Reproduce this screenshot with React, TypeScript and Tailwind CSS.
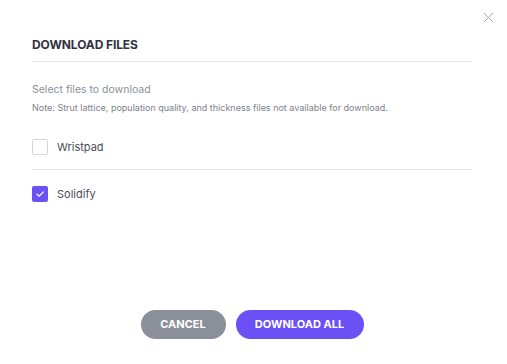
import React from "react";

function Check({ checked, label }: { checked: boolean; label: string }) {
  return (
    <div className="flex items-center gap-[9px]">
      {checked ? (
        <div className="w-4 h-4 rounded-[2px] bg-[#6b50f6] flex items-center justify-center">
          <svg width="10" height="10" viewBox="0 0 10 10" fill="none">
            <path d="M2 5.2 L4.2 7.2 L8.2 3" stroke="white" strokeWidth="1.2" strokeLinecap="round" strokeLinejoin="round" />
          </svg>
        </div>
      ) : (
        <div className="w-4 h-4 rounded-[2px] border border-[#d4d6da] bg-white" />
      )}
      <span className="text-[11px] leading-4 text-[#4a4d57]">{label}</span>
    </div>
  );
}

export default function App() {
  return (
    <div
      className="relative w-[507px] h-[364px] bg-white overflow-hidden"
      style={{ fontFamily: "Inter, 'Noto Sans', sans-serif" }}
    >
      <button className="absolute top-[11px] right-[13px] w-3 h-3 flex items-center justify-center">
        <svg width="11" height="11" viewBox="0 0 11 11" fill="none">
          <path d="M1 1 L10 10 M10 1 L1 10" stroke="#a3a6ad" strokeWidth="1" />
        </svg>
      </button>
      <div className="flex flex-col h-full pt-[37px] pl-8 pr-[35px] pb-[25px]">
        <h2 className="text-[12px] font-bold leading-4 text-[#2f3241] tracking-[-0.1px]">DOWNLOAD FILES</h2>
        <div className="mt-[8px] border-t border-[#e6e7ea]" />
        <p className="mt-[20px] text-[10.5px] leading-4 text-[#8c9099]">Select files to download</p>
        <p className="mt-[4px] text-[9px] leading-3 text-[#7d818a]">
          Note: Strut lattice, population quality, and thickness files not available for download.
        </p>
        <div className="mt-[25px]">
          <Check checked={false} label="Wristpad" />
        </div>
        <div className="mt-[14px] border-t border-[#e6e7ea]" />
        <div className="mt-[16px]">
          <Check checked={true} label="Solidify" />
        </div>
        <div className="mt-auto flex justify-center gap-[10px]">
          <button className="w-[85px] h-[29px] rounded-full bg-[#8a8f99] text-white text-[11px] font-bold">
            CANCEL
          </button>
          <button className="w-[128px] h-[29px] rounded-full bg-[#6b50f6] text-white text-[11px] font-bold">
            DOWNLOAD ALL
          </button>
        </div>
      </div>
    </div>
  );
}
